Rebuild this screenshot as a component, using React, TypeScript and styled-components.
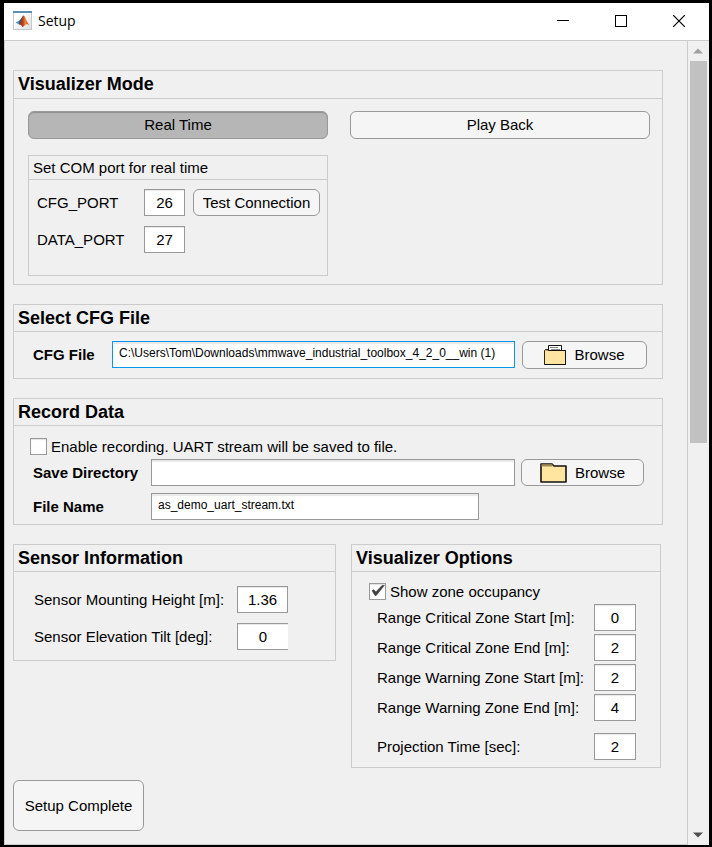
import React, { useState } from 'react';
import styled, { createGlobalStyle } from 'styled-components';

const GlobalStyle = createGlobalStyle`
  * { box-sizing: border-box; }
  html, body { margin: 0; background: #000; }
  body { font: 15px/20px "Liberation Sans", Arial, sans-serif; color: #000; }
  button, input { font: inherit; color: inherit; margin: 0; }
`;

const Window = styled.div`
  display: flex;
  flex-direction: column;
  min-height: 100vh;
  border: solid #000;
  border-width: 3px 3px 2px 4px;
  background: #f0f0f0;
`;

const TitleBar = styled.header`
  display: flex;
  align-items: center;
  height: 38px;
  padding: 0 10px 2px 9px;
  gap: 6px;
  background: #fff;
  border-bottom: 1px solid #ccc;
`;

const Title = styled.h1`
  flex: 1;
  margin: 0;
  font: 14px/20px "Open Sans", "Noto Sans", sans-serif;
`;

const WindowButtons = styled.div`
  display: flex;
  align-self: flex-start;
  gap: 18px;
`;

const WindowButton = styled.button`
  display: grid;
  place-items: center;
  width: 40px;
  height: 36px;
  padding: 0;
  border: 0;
  background: none;
`;

const Main = styled.div`
  flex: 1;
  display: flex;
`;

const Content = styled.main`
  flex: 1;
  display: flex;
  flex-direction: column;
  padding: 29px 24px 13px 8px;
  border: solid #ccc;
  border-width: 0 1px 1px 1px;
`;

const Stack = styled.div`
  display: flex;
  flex-direction: column;
  gap: 19px;
`;

const ScrollBar = styled.div`
  display: flex;
  flex-direction: column;
  width: 21px;
  padding-right: 2px;
`;

const ScrollArrow = styled.button`
  display: grid;
  place-items: center;
  height: 20px;
  padding: 0;
  border: 0;
  background: none;
`;

const Track = styled.div`
  flex: 1;
  padding: 0 0 0 2px;
`;

const Thumb = styled.div`
  width: 17px;
  height: 50%;
  background: #c1c1c1;
`;

const PanelBox = styled.section`
  border: 1px solid #ccc;
`;

const PanelTitle = styled.h2<{ $tall?: boolean }>`
  margin: 0;
  padding-left: 4px;
  height: ${p => (p.$tall ? 28 : 27)}px;
  border-bottom: 1px solid #ccc;
  font-size: 18px;
  line-height: 26px;
  font-weight: bold;
`;

const ModeBody = styled.div`
  display: grid;
  grid-template-columns: 1fr 1fr;
  gap: 16px 22px;
  padding: 12px 12px 8px 14px;
`;

const PortBox = styled.fieldset`
  min-width: 0;
  margin: 0;
  padding: 0;
  border: 1px solid #ccc;
`;

const PortTitle = styled.div`
  height: 24px;
  padding-left: 4px;
  border-bottom: 1px solid #ccc;
  line-height: 24px;
`;

const PortGrid = styled.div`
  display: grid;
  grid-template-columns: 107px 41px 135px;
  row-gap: 10px;
  align-items: center;
  padding: 9px 7px 22px 8px;

  button { margin-left: 8px; height: 27px; }
`;

const Button = styled.button<{ $pressed?: boolean; $large?: boolean }>`
  display: flex;
  align-items: center;
  justify-content: center;
  gap: 8px;
  height: ${p => (p.$large ? 51 : 28)}px;
  width: ${p => (p.$large ? '131px' : 'auto')};
  padding: 0;
  white-space: nowrap;
  border: 1px solid #999;
  border-radius: 6px;
  background: ${p => (p.$pressed ? '#b6b6b6' : '#f5f5f5')};
  box-shadow: ${p => (p.$pressed ? 'inset 0 1px 1px #8e8e8e' : 'none')};
`;

const NumberBox = styled.input<{ $open?: boolean }>`
  width: 100%;
  height: 27px;
  padding: 0;
  border: 1px solid #999;
  border-right-width: ${p => (p.$open ? 0 : 1)}px;
  border-radius: 0;
  background: #fff;
  box-shadow: inset 0 1px 1px #e8e8e8;
  text-align: center;
`;

const TextBox = styled.input<{ $focused?: boolean; $narrow?: boolean }>`
  align-self: start;
  min-width: 0;
  width: ${p => (p.$narrow ? '90%' : '100%')};
  height: 27px;
  padding: 0 6px 3px;
  border: 1px solid ${p => (p.$focused ? '#0a95ed' : '#999')};
  border-radius: 0;
  background: #fff;
  box-shadow: inset 0 2px 1px #e8e8e8;
  font-size: 12px;
  outline: none;
`;

const FileRow = styled.div`
  display: grid;
  grid-template-columns: 79px 1fr 132px;
  align-items: center;
  padding: 9px 15px 9px 19px;

  button { margin-left: 7px; }
`;

const BoldLabel = styled.label`
  font-weight: bold;
  white-space: nowrap;
`;

const RecordBody = styled.div`
  padding: 12px 18px 4px 16px;
`;

const RecordGrid = styled.div`
  display: grid;
  grid-template-columns: 118px 1fr 129px;
  row-gap: 7px;
  align-items: center;
  padding: 4px 0 0 3px;

  button { margin-left: 6px; height: 27px; }
`;

const CheckLabel = styled.label`
  display: flex;
  align-items: center;
  gap: 4px;
  height: 17px;
  white-space: nowrap;
`;

const CheckStack = styled.span`
  display: grid;
  width: 17px;
  height: 17px;

  > * { grid-area: 1 / 1; }
  svg { pointer-events: none; }
`;

const CheckInput = styled.input`
  appearance: none;
  width: 17px;
  height: 17px;
  border: 1px solid #999;
  background: #fff;
  box-shadow: inset 0 1px 1px #e0e0e0;
`;

const Columns = styled.div`
  display: grid;
  grid-template-columns: 323fr 310fr;
  gap: 15px;
  align-items: start;
  padding-right: 2px;
`;

const SensorGrid = styled.div`
  display: grid;
  grid-template-columns: 203px 51px;
  row-gap: 10px;
  align-items: center;
  padding: 14px 0 10px 20px;
`;

const OptionsBody = styled.div`
  padding: 11px 24px 7px 17px;
`;

const OptionRow = styled.div<{ $apart?: boolean }>`
  display: grid;
  grid-template-columns: 1fr 42px;
  align-items: center;
  margin-top: ${p => (p.$apart ? 12 : 3)}px;
  padding-left: 8px;
  white-space: nowrap;
`;

const OptionHead = styled.div`
  padding-bottom: 1px;
`;

const Footer = styled.footer`
  margin-top: 12px;
`;

function MatlabIcon() {
  return (
    <svg width="19" height="19" viewBox="0 0 19 19" aria-hidden="true">
      <defs>
        <linearGradient id="tile" x1="0" y1="0" x2="1" y2="1">
          <stop offset="0.3" stopColor="#fff" />
          <stop offset="1" stopColor="#dcdfe1" />
        </linearGradient>
        <linearGradient id="peak" x1="0" y1="0" x2="1" y2="0">
          <stop offset="0" stopColor="#7a2418" />
          <stop offset="0.4" stopColor="#c8431a" />
          <stop offset="0.6" stopColor="#f08a28" />
          <stop offset="1" stopColor="#c0391a" />
        </linearGradient>
      </defs>
      <rect x="0.5" y="0.5" width="18" height="18" fill="url(#tile)" stroke="#c4c8cb" />
      <rect width="19" height="2" fill="#5c8fb8" />
      <path d="M2.5 11.5 L6.5 9.5 L9 7 L8.5 12 L6 13.5 Z" fill="#4a96c8" />
      <path d="M6.5 9.5 C8 9 9 5 10.5 4.5 L9 12 L6 13.5 Z" fill="#2f587c" />
      <path d="M6 13.5 C8 12.5 9 5 10.7 4.5 C12.5 5.5 13.8 11.5 16.5 14.5 C14.3 12.8 13 13.2 12 14.3 L9.5 16.3 C8.8 14.5 7.5 13 6 13.5 Z" fill="url(#peak)" />
    </svg>
  );
}

function FolderFileIcon() {
  return (
    <svg width="22" height="21" viewBox="0 0 22 21" aria-hidden="true">
      <path d="M0.5 19.5 V5.5 L1.5 4.5 H5 V5.5 H21.5 V19.5 Z" fill="#c9a14d" stroke="#2a2418" />
      <path d="M4.5 7 V0.5 H17.5 V7" fill="#fff" stroke="#111" />
      <path d="M6 2.5 H14 M7 4.5 H16" stroke="#888" />
      <path d="M1 6 H4 L5 5.5 H21 V19 H1 Z" fill="#ffe5a0" />
      <path d="M4.5 5.5 H21.5 V19.5 H0.5" fill="none" stroke="#111" />
    </svg>
  );
}

function FolderIcon() {
  return (
    <svg width="27" height="20" viewBox="0 0 27 20" aria-hidden="true">
      <path d="M1 19 V1 H12 L14 3 H26 V19 Z" fill="#ffe5a0" stroke="#111" strokeWidth="1.6" strokeLinejoin="round" />
      <path d="M1.5 1.2 H12 L13 2.2 L12 3.4 H1.5 Z" fill="#9d8a57" />
    </svg>
  );
}

function CheckBox({ label, initial = false }: { label: string; initial?: boolean }) {
  const [on, setOn] = useState(initial);
  return (
    <CheckLabel>
      <CheckStack>
        <CheckInput type="checkbox" checked={on} onChange={e => setOn(e.target.checked)} />
        {on && (
          <svg width="17" height="17" viewBox="0 0 17 17" aria-hidden="true">
            <path d="M3 7.5 L5 6.8 L6.8 9 L13 2.5 L15.3 2.5 L7.2 12.5 H6 Z" fill="#404040" stroke="#404040" strokeWidth="0.6" />
          </svg>
        )}
      </CheckStack>
      {label}
    </CheckLabel>
  );
}

const ranges = [
  { id: 'crit-start', label: 'Range Critical Zone Start [m]:', value: '0' },
  { id: 'crit-end', label: 'Range Critical Zone End [m]:', value: '2' },
  { id: 'warn-start', label: 'Range Warning Zone Start [m]:', value: '2' },
  { id: 'warn-end', label: 'Range Warning Zone End [m]:', value: '4' },
  { id: 'projection', label: 'Projection Time [sec]:', value: '2', apart: true },
];

export default function App() {
  const [mode, setMode] = useState('real');
  return (
    <>
      <GlobalStyle />
      <Window>
        <TitleBar>
          <MatlabIcon />
          <Title>Setup</Title>
          <WindowButtons>
            <WindowButton aria-label="Minimize">
              <svg width="12" height="12"><path d="M0 5.5 H12" stroke="#000" /></svg>
            </WindowButton>
            <WindowButton aria-label="Maximize">
              <svg width="12" height="12"><rect x="0.5" y="0.5" width="11" height="11" fill="none" stroke="#000" /></svg>
            </WindowButton>
            <WindowButton aria-label="Close">
              <svg width="12" height="12"><path d="M0 0 L12 12 M12 0 L0 12" stroke="#000" strokeWidth="1.2" /></svg>
            </WindowButton>
          </WindowButtons>
        </TitleBar>
        <Main>
          <Content>
            <Stack>
              <PanelBox>
                <PanelTitle $tall>Visualizer Mode</PanelTitle>
                <ModeBody>
                  <Button $pressed={mode === 'real'} aria-pressed={mode === 'real'} onClick={() => setMode('real')}>Real Time</Button>
                  <Button $pressed={mode === 'play'} aria-pressed={mode === 'play'} onClick={() => setMode('play')}>Play Back</Button>
                  <PortBox aria-labelledby="port-title">
                    <PortTitle id="port-title">Set COM port for real time</PortTitle>
                    <PortGrid>
                      <label htmlFor="cfg-port">CFG_PORT</label>
                      <NumberBox id="cfg-port" defaultValue="26" />
                      <Button>Test Connection</Button>
                      <label htmlFor="data-port">DATA_PORT</label>
                      <NumberBox id="data-port" defaultValue="27" />
                    </PortGrid>
                  </PortBox>
                </ModeBody>
              </PanelBox>

              <PanelBox>
                <PanelTitle>Select CFG File</PanelTitle>
                <FileRow>
                  <BoldLabel htmlFor="cfg-file">CFG File</BoldLabel>
                  <TextBox id="cfg-file" $focused defaultValue="C:\Users\Tom\Downloads\mmwave_industrial_toolbox_4_2_0__win (1)" />
                  <Button><FolderFileIcon />Browse</Button>
                </FileRow>
              </PanelBox>

              <PanelBox>
                <PanelTitle>Record Data</PanelTitle>
                <RecordBody>
                  <CheckBox label="Enable recording. UART stream will be saved to file." />
                  <RecordGrid>
                    <BoldLabel htmlFor="save-dir">Save Directory</BoldLabel>
                    <TextBox id="save-dir" />
                    <Button><FolderIcon />Browse</Button>
                    <BoldLabel htmlFor="file-name">File Name</BoldLabel>
                    <TextBox id="file-name" $narrow defaultValue="as_demo_uart_stream.txt" />
                  </RecordGrid>
                </RecordBody>
              </PanelBox>

              <Columns>
                <PanelBox>
                  <PanelTitle>Sensor Information</PanelTitle>
                  <SensorGrid>
                    <label htmlFor="height">Sensor Mounting Height [m]:</label>
                    <NumberBox id="height" defaultValue="1.36" />
                    <label htmlFor="tilt">Sensor Elevation Tilt [deg]:</label>
                    <NumberBox id="tilt" $open defaultValue="0" />
                  </SensorGrid>
                </PanelBox>
                <PanelBox>
                  <PanelTitle>Visualizer Options</PanelTitle>
                  <OptionsBody>
                    <OptionHead>
                      <CheckBox label="Show zone occupancy" initial />
                    </OptionHead>
                    {ranges.map(r => (
                      <OptionRow key={r.id} $apart={r.apart}>
                        <label htmlFor={r.id}>{r.label}</label>
                        <NumberBox id={r.id} defaultValue={r.value} />
                      </OptionRow>
                    ))}
                  </OptionsBody>
                </PanelBox>
              </Columns>
            </Stack>
            <Footer>
              <Button $large>Setup Complete</Button>
            </Footer>
          </Content>
          <ScrollBar>
            <ScrollArrow aria-label="Scroll up">
              <svg width="10" height="6"><path d="M0 5.5 L5 0.5 L10 5.5 Z" fill="#a0a0a0" /></svg>
            </ScrollArrow>
            <Track><Thumb /></Track>
            <ScrollArrow aria-label="Scroll down">
              <svg width="10" height="6"><path d="M0 0.5 L5 5.5 L10 0.5 Z" fill="#505050" /></svg>
            </ScrollArrow>
          </ScrollBar>
        </Main>
      </Window>
    </>
  );
}
